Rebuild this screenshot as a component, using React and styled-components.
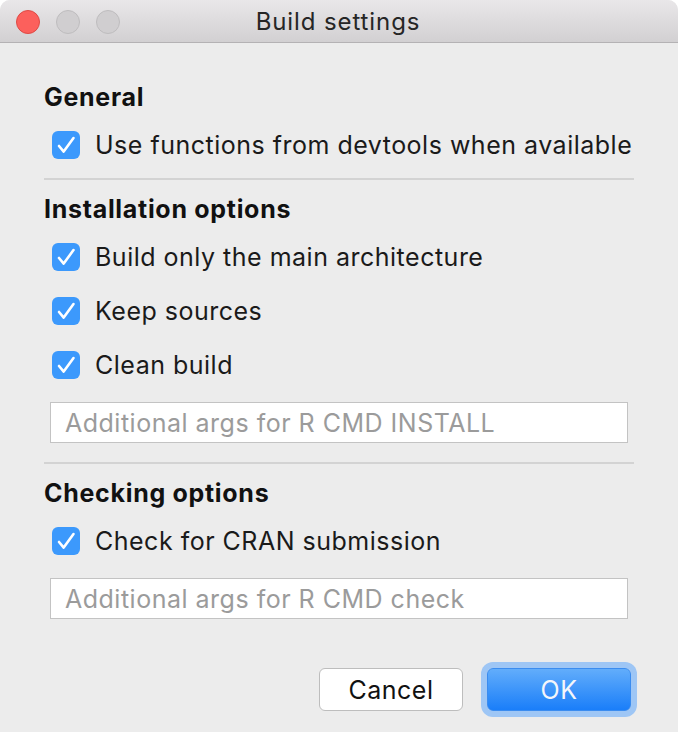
import styled, { createGlobalStyle } from "styled-components";

const Global = createGlobalStyle`
  html, body {
    margin: 0;
    padding: 0;
    background: #ffffff;
  }
  body {
    font-family: Inter, "Liberation Sans", sans-serif;
  }
`;

const Window = styled.div`
  width: 678px;
  height: 732px;
  background: #ececec;
  border-radius: 10px 10px 0 0;
  overflow: hidden;
  display: flex;
  flex-direction: column;
  box-sizing: border-box;
`;

const TitleBar = styled.div`
  height: 43px;
  flex: none;
  position: relative;
  display: flex;
  align-items: center;
  justify-content: center;
  background: linear-gradient(to bottom, #e9e7e9, #d2d0d2);
  border-bottom: 1px solid #b4b2b4;
  box-sizing: border-box;
`;

const Lights = styled.div`
  position: absolute;
  left: 16px;
  top: 10px;
  display: flex;
  gap: 16px;
`;

const Light = styled.div`
  width: 24px;
  height: 24px;
  border-radius: 50%;
  box-sizing: border-box;
  background: ${(p) => (p.$red ? "#fc605c" : "#d0ced0")};
  border: 1px solid ${(p) => (p.$red ? "#de4a45" : "#bebcbe")};
`;

const Title = styled.div`
  font-size: 24px;
  letter-spacing: 0.9px;
  color: #262626;
  margin-left: -2px;
`;

const Body = styled.div`
  flex: 1;
  padding: 36px 44px 0 44px;
  display: flex;
  flex-direction: column;
`;

const Heading = styled.div`
  font-size: 25px;
  font-weight: 700;
  letter-spacing: 0.7px;
  color: #111;
  height: 36px;
  line-height: 36px;
  margin-bottom: 3px;
`;

const Row = styled.label`
  display: flex;
  align-items: center;
  height: 54px;
  padding-left: 8px;
  gap: 15px;
  font-size: 25px;
  letter-spacing: 0.5px;
  color: #1a1a1a;
`;

const Box = styled.span`
  width: 28px;
  height: 28px;
  flex: none;
  border-radius: 6px;
  background: #3c99fc;
  display: flex;
`;

const Separator = styled.div`
  height: 2px;
  background: #d3d3d3;
  margin: ${(p) => p.$m};
`;

const Field = styled.input`
  margin: 10px 0 0 6px;
  width: 578px;
  height: 41px;
  box-sizing: border-box;
  border: 1px solid #c3c3c3;
  background: #fff;
  padding: 0 14px;
  font-family: inherit;
  font-size: 25px;
  letter-spacing: 0.5px;
  outline: none;
  &::placeholder {
    color: #9b9b9b;
  }
`;

const Buttons = styled.div`
  margin-top: 49px;
  display: flex;
  justify-content: flex-end;
  align-items: center;
  gap: 24px;
  padding-right: 3px;
`;

const Button = styled.button`
  width: 144px;
  height: 43px;
  box-sizing: border-box;
  font-family: inherit;
  font-size: 25px;
  letter-spacing: 0.5px;
  border-radius: 6px;
  border: 1px solid ${(p) => (p.$primary ? "#3a8cf0" : "#bdbdbd")};
  color: ${(p) => (p.$primary ? "#f4f6fa" : "#111")};
  background: ${(p) =>
    p.$primary ? "linear-gradient(to bottom, #62adfb, #1a7ef9)" : "#fff"};
  box-shadow: ${(p) => (p.$primary ? "0 0 0 6px #9ec6f5" : "none")};
`;

const Check = () => (
  <Box>
    <svg width="28" height="28" viewBox="0 0 28 28">
      <path
        d="M7 15 L11.7 20.6 L21.5 7"
        fill="none"
        stroke="#fff"
        strokeWidth="2.6"
        strokeLinecap="round"
        strokeLinejoin="round"
      />
    </svg>
  </Box>
);

const Option = ({ children }) => (
  <Row>
    <Check />
    {children}
  </Row>
);

export default function App() {
  return (
    <>
      <Global />
      <Window>
        <TitleBar>
          <Lights>
            <Light $red />
            <Light />
            <Light />
          </Lights>
          <Title>Build settings</Title>
        </TitleBar>
        <Body>
          <Heading>General</Heading>
          <Option>Use functions from devtools when available</Option>
          <Separator $m="6px 0 11px 0" />
          <Heading>Installation options</Heading>
          <Option>Build only the main architecture</Option>
          <Option>Keep sources</Option>
          <Option>Clean build</Option>
          <Field placeholder="Additional args for R CMD INSTALL" />
          <Separator $m="19px 0 11px 0" />
          <Heading>Checking options</Heading>
          <Option>Check for CRAN submission</Option>
          <Field placeholder="Additional args for R CMD check" />
          <Buttons>
            <Button>Cancel</Button>
            <Button $primary>OK</Button>
          </Buttons>
        </Body>
      </Window>
    </>
  );
}
